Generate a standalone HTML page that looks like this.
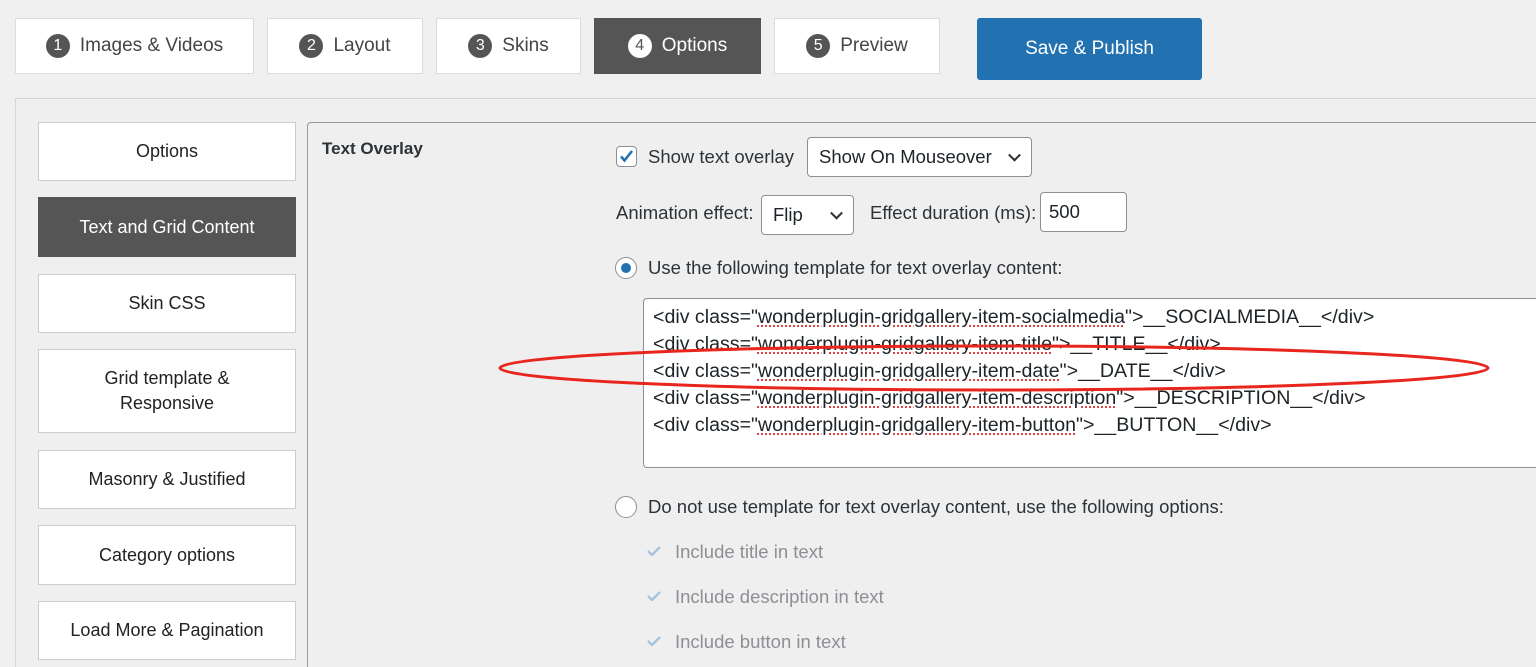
<!DOCTYPE html><html><head><style>
*{box-sizing:border-box;margin:0;padding:0}
html,body{width:1536px;height:667px;overflow:hidden}
body{background:#f0f0f0;font-family:"Liberation Sans",sans-serif;color:#1d2327;position:relative}
.a{position:absolute}
.tab{position:absolute;top:18px;height:56px;background:#fff;border:1px solid #dcdcdc;display:flex;align-items:center;justify-content:center;font-size:19px;color:#444;font-weight:300}
.tab .n{display:inline-block;width:24px;height:24px;border-radius:50%;background:#555;color:#fff;font-size:16px;line-height:24px;text-align:center;margin-right:10px}
.tab.on{background:#555;color:#fff;border-color:#555}
.tab.on .n{background:#fff;color:#555}
.lb{position:absolute;left:38px;width:258px;background:#fff;border:1px solid #ccc;display:flex;align-items:center;justify-content:center;text-align:center;font-size:18px;color:#222;line-height:25px}
.lb.on{background:#555;color:#fff;border-color:#555}
.t{position:absolute;font-size:18.5px;color:#2c3338;white-space:nowrap}
.sel{position:absolute;background:#fff;border:1px solid #8c8f94;border-radius:4px;font-size:18.5px;color:#1d2327;padding-left:11px;display:flex;align-items:center}
.chev{position:absolute;right:12px;top:50%;width:9px;height:9px;border-right:2px solid #333;border-bottom:2px solid #333;transform:translateY(-70%) rotate(45deg)}
.code{position:absolute;left:643px;top:298px;width:893px;height:170px;background:#fff;border:1px solid #8c8f94;border-right:none;border-radius:4px 0 0 4px;padding:5px 9px;font-size:19.6px;line-height:27px;color:#1d2327;white-space:nowrap;overflow:hidden}
.code u{text-decoration:underline dotted #e04040;text-underline-offset:3px}
.cb{position:absolute;left:647px;width:14px;height:10px}
</style></head><body>
<div class="tab" style="left:15px;width:239px"><span class="n">1</span>Images &amp; Videos</div>
<div class="tab" style="left:267px;width:156px"><span class="n">2</span>Layout</div>
<div class="tab" style="left:436px;width:145px"><span class="n">3</span>Skins</div>
<div class="tab on" style="left:594px;width:167px"><span class="n">4</span>Options</div>
<div class="tab" style="left:774px;width:166px"><span class="n">5</span>Preview</div>
<div class="a" style="left:977px;top:18px;width:225px;height:62px;background:#2271b1;border-radius:3px;color:#fff;font-size:19px;font-weight:300;display:flex;align-items:center;justify-content:center">Save &amp; Publish</div>
<div class="a" style="left:15px;top:98px;width:1521px;height:569px;border:1px solid #d5d5d5;border-right:none;border-bottom:none;background:#efefef"></div>
<div class="lb" style="top:122px;height:59px">Options</div>
<div class="lb on" style="top:197px;height:60px">Text and Grid Content</div>
<div class="lb" style="top:274px;height:59px">Skin CSS</div>
<div class="lb" style="top:349px;height:84px">Grid template &amp;<br>Responsive</div>
<div class="lb" style="top:450px;height:59px">Masonry &amp; Justified</div>
<div class="lb" style="top:525px;height:60px">Category options</div>
<div class="lb" style="top:601px;height:59px">Load More &amp; Pagination</div>
<div class="a" style="left:307px;top:122px;width:1229px;height:545px;border:1px solid #999;border-right:none;border-bottom:none;border-radius:4px 0 0 0;background:#efefef"></div>
<div class="t" style="left:322px;top:139px;font-weight:bold;font-size:17px">Text Overlay</div>
<div class="a" style="left:616px;top:146px;width:21px;height:21px;border:1px solid #8c8f94;border-radius:4px;background:#fff"><svg width="19" height="19" viewBox="0 0 19 19"><path d="M4 9.5l3.5 4L15 4" stroke="#2271b1" stroke-width="2.6" fill="none"/></svg></div>
<div class="t" style="left:648px;top:146px">Show text overlay</div>
<div class="sel" style="left:807px;top:137px;width:225px;height:40px">Show On Mouseover<span class="chev"></span></div>
<div class="t" style="left:616px;top:202px">Animation effect:</div>
<div class="sel" style="left:761px;top:195px;width:93px;height:40px">Flip<span class="chev"></span></div>
<div class="t" style="left:870px;top:202px">Effect duration (ms):</div>
<div class="sel" style="left:1040px;top:192px;width:87px;height:40px;padding-left:8px">500</div>
<div class="a" style="left:615px;top:257px;width:22px;height:22px;border:1px solid #8c8f94;border-radius:50%;background:#fff"><div class="a" style="left:5px;top:5px;width:10px;height:10px;border-radius:50%;background:#2271b1"></div></div>
<div class="t" style="left:648px;top:257px">Use the following template for text overlay content:</div>
<div class="code">&lt;div class="<u>wonderplugin-gridgallery-item-socialmedia</u>"&gt;__SOCIALMEDIA__&lt;/div&gt;<br>&lt;div class="<u>wonderplugin-gridgallery-item-title</u>"&gt;__TITLE__&lt;/div&gt;<br>&lt;div class="<u>wonderplugin-gridgallery-item-date</u>"&gt;__DATE__&lt;/div&gt;<br>&lt;div class="<u>wonderplugin-gridgallery-item-description</u>"&gt;__DESCRIPTION__&lt;/div&gt;<br>&lt;div class="<u>wonderplugin-gridgallery-item-button</u>"&gt;__BUTTON__&lt;/div&gt;</div>
<svg class="a" style="left:0;top:0" width="1536" height="667"><ellipse cx="994" cy="368" rx="494" ry="22" fill="none" stroke="#e8261e" stroke-width="3"/></svg>
<div class="a" style="left:615px;top:496px;width:22px;height:22px;border:1px solid #8c8f94;border-radius:50%;background:#fff"></div>
<div class="t" style="left:648px;top:496px">Do not use template for text overlay content, use the following options:</div>
<svg class="cb" style="top:546px" viewBox="0 0 14 10"><path d="M1 5l4 4L13 1" stroke="#a7c4de" stroke-width="2.4" fill="none"/></svg>
<div class="t" style="left:675px;top:541px;color:#8c8f94">Include title in text</div>
<svg class="cb" style="top:591px" viewBox="0 0 14 10"><path d="M1 5l4 4L13 1" stroke="#a7c4de" stroke-width="2.4" fill="none"/></svg>
<div class="t" style="left:675px;top:586px;color:#8c8f94">Include description in text</div>
<svg class="cb" style="top:636px" viewBox="0 0 14 10"><path d="M1 5l4 4L13 1" stroke="#a7c4de" stroke-width="2.4" fill="none"/></svg>
<div class="t" style="left:675px;top:631px;color:#8c8f94">Include button in text</div>
</body></html>
